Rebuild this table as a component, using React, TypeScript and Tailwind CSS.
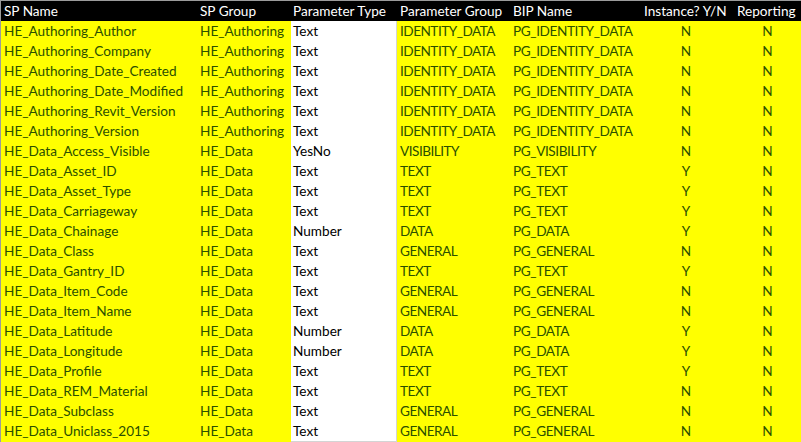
import React from "react";

type Row = [string, string, string, string, string, string, string];

const rows: Row[] = [
  ["HE_Authoring_Author", "HE_Authoring", "Text", "IDENTITY_DATA", "PG_IDENTITY_DATA", "N", "N"],
  ["HE_Authoring_Company", "HE_Authoring", "Text", "IDENTITY_DATA", "PG_IDENTITY_DATA", "N", "N"],
  ["HE_Authoring_Date_Created", "HE_Authoring", "Text", "IDENTITY_DATA", "PG_IDENTITY_DATA", "N", "N"],
  ["HE_Authoring_Date_Modified", "HE_Authoring", "Text", "IDENTITY_DATA", "PG_IDENTITY_DATA", "N", "N"],
  ["HE_Authoring_Revit_Version", "HE_Authoring", "Text", "IDENTITY_DATA", "PG_IDENTITY_DATA", "N", "N"],
  ["HE_Authoring_Version", "HE_Authoring", "Text", "IDENTITY_DATA", "PG_IDENTITY_DATA", "N", "N"],
  ["HE_Data_Access_Visible", "HE_Data", "YesNo", "VISIBILITY", "PG_VISIBILITY", "N", "N"],
  ["HE_Data_Asset_ID", "HE_Data", "Text", "TEXT", "PG_TEXT", "Y", "N"],
  ["HE_Data_Asset_Type", "HE_Data", "Text", "TEXT", "PG_TEXT", "Y", "N"],
  ["HE_Data_Carriageway", "HE_Data", "Text", "TEXT", "PG_TEXT", "Y", "N"],
  ["HE_Data_Chainage", "HE_Data", "Number", "DATA", "PG_DATA", "Y", "N"],
  ["HE_Data_Class", "HE_Data", "Text", "GENERAL", "PG_GENERAL", "N", "N"],
  ["HE_Data_Gantry_ID", "HE_Data", "Text", "TEXT", "PG_TEXT", "Y", "N"],
  ["HE_Data_Item_Code", "HE_Data", "Text", "GENERAL", "PG_GENERAL", "N", "N"],
  ["HE_Data_Item_Name", "HE_Data", "Text", "GENERAL", "PG_GENERAL", "N", "N"],
  ["HE_Data_Latitude", "HE_Data", "Number", "DATA", "PG_DATA", "Y", "N"],
  ["HE_Data_Longitude", "HE_Data", "Number", "DATA", "PG_DATA", "Y", "N"],
  ["HE_Data_Profile", "HE_Data", "Text", "TEXT", "PG_TEXT", "Y", "N"],
  ["HE_Data_REM_Material", "HE_Data", "Text", "TEXT", "PG_TEXT", "N", "N"],
  ["HE_Data_Subclass", "HE_Data", "Text", "GENERAL", "PG_GENERAL", "N", "N"],
  ["HE_Data_Uniclass_2015", "HE_Data", "Text", "GENERAL", "PG_GENERAL", "N", "N"],
];

const cols = "grid grid-cols-[196px_94px_106px_113px_128px_96px_67px]";

export default function App() {
  return (
    <div className="w-[801px] h-[442px] overflow-hidden bg-white border-t border-l border-[#9b9b9b] font-['Lato','Liberation_Sans',sans-serif] text-[13.6px] leading-[20px]">
      {/* Header */}
      <div className={`${cols} h-[20px] bg-black text-white`}>
        <div className="pl-[3px] whitespace-nowrap">SP Name</div>
        <div className="pl-[3px] whitespace-nowrap">SP Group</div>
        <div className="pl-[2px] whitespace-nowrap">Parameter Type</div>
        <div className="pl-[3px] whitespace-nowrap">Parameter Group</div>
        <div className="pl-[3px] whitespace-nowrap">BIP Name</div>
        <div className="pl-[6px] whitespace-nowrap">Instance? Y/N</div>
        <div className="pl-[3px] whitespace-nowrap">Reporting</div>
      </div>

      {/* Rows */}
      {rows.map((r) => (
        <div key={r[0]} className={`${cols} h-[20px] text-[#2b4f00]`}>
          <div className="bg-[#ffff00] pl-[3px] whitespace-nowrap">{r[0]}</div>
          <div className="bg-[#ffff00] pl-[3px] whitespace-nowrap">{r[1]}</div>
          <div className="bg-white text-black pl-[2px] whitespace-nowrap border-b border-r border-[#d4d4d4]">{r[2]}</div>
          <div className="bg-[#ffff00] pl-[3px] whitespace-nowrap tracking-[-0.5px]">{r[3]}</div>
          <div className="bg-[#ffff00] pl-[3px] whitespace-nowrap tracking-[-0.4px]">{r[4]}</div>
          <div className="bg-[#ffff00] text-center">{r[5]}</div>
          <div className="bg-[#ffff00] text-center">{r[6]}</div>
        </div>
      ))}
    </div>
  );
}
